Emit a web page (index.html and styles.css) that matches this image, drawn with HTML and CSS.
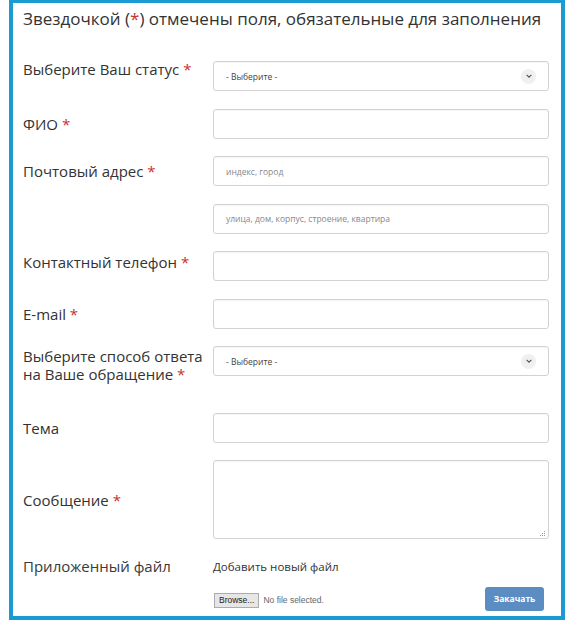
FILE: index.html
```html
<!DOCTYPE html>
<html lang="ru">
<head>
<meta charset="utf-8">
<title>Обращение</title>
<link rel="stylesheet" href="styles.css">
</head>
<body>
<div class="frame">
  <p class="note">Звездочкой (<span class="req">*</span>) отмечены поля, обязательные для заполнения</p>
  <form class="form">
    <div class="row">
      <label class="label label-up">Выберите Ваш статус <span class="req">*</span></label>
      <div class="select"><span>- Выберите -</span><span class="chev"><svg width="6" height="4" viewBox="0 0 6 4"><path d="M0.6 0.8 L3 3.2 L5.4 0.8" fill="none" stroke="#555" stroke-width="1.1"/></svg></span></div>
    </div>
    <div class="row">
      <label class="label">ФИО <span class="req">*</span></label>
      <div class="input"></div>
    </div>
    <div class="row">
      <label class="label">Почтовый адрес <span class="req">*</span></label>
      <div class="stack">
        <div class="input ph">индекс, город</div>
        <div class="input ph">улица, дом, корпус, строение, квартира</div>
      </div>
    </div>
    <div class="row">
      <label class="label label-up2">Контактный телефон <span class="req">*</span></label>
      <div class="input"></div>
    </div>
    <div class="row">
      <label class="label">E-mail <span class="req">*</span></label>
      <div class="input"></div>
    </div>
    <div class="row">
      <label class="label label-two">Выберите способ ответа на Ваше обращение <span class="req">*</span></label>
      <div class="select"><span>- Выберите -</span><span class="chev"><svg width="6" height="4" viewBox="0 0 6 4"><path d="M0.6 0.8 L3 3.2 L5.4 0.8" fill="none" stroke="#555" stroke-width="1.1"/></svg></span></div>
    </div>
    <div class="row row-topic">
      <label class="label">Тема</label>
      <div class="input"></div>
    </div>
    <div class="row row-center">
      <label class="label">Сообщение <span class="req">*</span></label>
      <div class="textarea"><span class="grip"><svg width="7" height="7" viewBox="0 0 7 7"><g fill="#999"><rect x="5" y="1" width="1" height="1"/><rect x="5" y="3" width="1" height="1"/><rect x="3" y="3" width="1" height="1"/><rect x="5" y="5" width="1" height="1"/><rect x="3" y="5" width="1" height="1"/><rect x="1" y="5" width="1" height="1"/></g></svg></span></div>
    </div>
    <div class="row">
      <label class="label label-file">Приложенный файл</label>
      <div class="filebox">
        <div class="addfile">Добавить новый файл</div>
        <div class="fileline">
          <div class="picker"><span class="browse">Browse...</span><span class="nofile">No file selected.</span></div>
          <span class="upload">Закачать</span>
        </div>
      </div>
    </div>
  </form>
</div>
</body>
</html>
```
FILE: styles.css
```css
html, body {
  margin: 0;
  padding: 0;
  background: #fff;
}
body {
  font-family: "Open Sans", "Noto Sans", sans-serif;
  color: #333;
}
.frame {
  box-sizing: border-box;
  width: 556px;
  height: 620px;
  margin-left: 9px;
  border: 4px solid #1a9bd4;
  border-top-width: 3px;
  padding: 4px 12px 0 10px;
}
.note {
  margin: 0;
  font-size: 17px;
  line-height: 24px;
  color: #333;
}
.req {
  color: #c9302c;
}
.form {
  display: flex;
  flex-direction: column;
  gap: 17.5px;
  margin-top: 30px;
}
.row {
  display: grid;
  grid-template-columns: 190px 336px;
  align-items: start;
}
.label {
  font-size: 15px;
  line-height: 30px;
  color: #333;
}
.label-up {
  margin-top: -7px;
}
.label-up2 {
  margin-top: -4px;
}
.label-two {
  line-height: 18px;
  padding-top: 1px;
}
.row-topic {
  margin-top: 12px;
}
.row-center {
  align-items: center;
}
.input, .select {
  box-sizing: border-box;
  height: 30px;
  border: 1px solid #d2d2d2;
  border-radius: 3px;
  background: #fff;
  box-shadow: inset 0 1px 1px rgba(0,0,0,0.04);
}
.ph {
  display: flex;
  align-items: center;
  padding-left: 12px;
  font-size: 8.5px;
  color: #888;
}
.stack {
  display: flex;
  flex-direction: column;
  gap: 17.5px;
}
.select {
  display: flex;
  align-items: center;
  justify-content: space-between;
  padding: 0 12px 0 12px;
  font-size: 8.5px;
  color: #444;
}
.chev {
  display: flex;
  align-items: center;
  justify-content: center;
  width: 15px;
  height: 15px;
  border-radius: 50%;
  background: #f0f0f0;
}
.textarea {
  position: relative;
  box-sizing: border-box;
  height: 79px;
  border: 1px solid #d2d2d2;
  border-radius: 3px;
  box-shadow: inset 0 1px 1px rgba(0,0,0,0.04);
}
.grip {
  position: absolute;
  right: 2px;
  bottom: 1px;
  display: flex;
}
.label-file {
  margin-top: -6px;
  color: #3a3a3a;
}
.filebox {
  display: flex;
  flex-direction: column;
}
.addfile {
  font-size: 11.5px;
  line-height: 20px;
  color: #333;
}
.fileline {
  display: flex;
  align-items: center;
  justify-content: space-between;
  margin-top: 10px;
  padding-right: 5px;
}
.picker {
  display: flex;
  align-items: center;
  gap: 4px;
  padding-left: 1px;
  margin-top: 3px;
}
.browse {
  box-sizing: border-box;
  height: 15px;
  padding: 0 4px;
  border: 1px solid #acacac;
  background: #e6e6e6;
  font-family: "Liberation Sans", Arial, sans-serif;
  font-size: 8.5px;
  line-height: 13px;
  color: #222;
}
.nofile {
  font-family: "Liberation Sans", Arial, sans-serif;
  font-size: 8.5px;
  color: #666;
}
.upload {
  display: flex;
  align-items: center;
  justify-content: center;
  width: 59px;
  height: 24px;
  border-radius: 3px;
  background: #5b8dc2;
  color: #fff;
  font-size: 8.5px;
  font-weight: 700;
}
```
